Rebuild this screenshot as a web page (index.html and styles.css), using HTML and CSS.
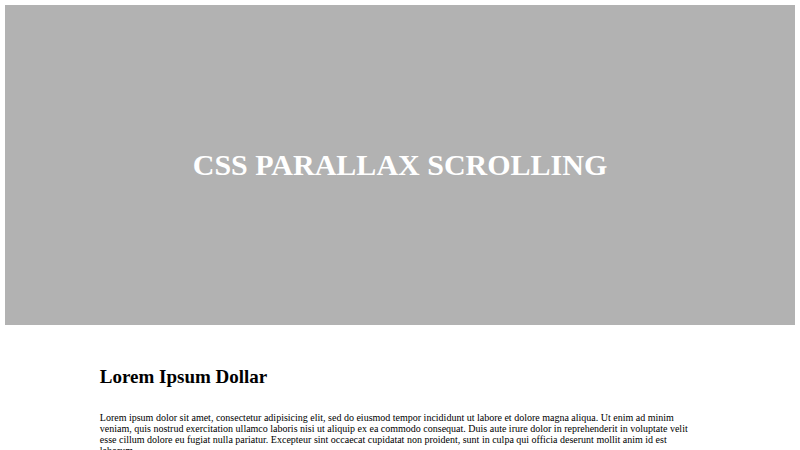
FILE: index.html
```
<!DOCTYPE html>
<html lang="en">
<head>
    <meta charset="UTF-8">
    <meta name="viewport" content="width=device-width, initial-scale=1.0">
    <title>CSS Parallax Scrolling</title>
    <link rel="stylesheet" href="styles.css">
</head>
<body>
    <header class="hero">
        <h1>CSS Parallax Scrolling</h1>
    </header>
    <section class="content">
        <h2>Lorem Ipsum Dollar</h2>
        <p>Lorem ipsum dolor sit amet, consectetur adipisicing elit, sed do eiusmod tempor incididunt ut labore et dolore magna aliqua. Ut enim ad minim veniam, quis nostrud exercitation ullamco laboris nisi ut aliquip ex ea commodo consequat. Duis aute irure dolor in reprehenderit in voluptate velit esse cillum dolore eu fugiat nulla pariatur. Excepteur sint occaecat cupidatat non proident, sunt in culpa qui officia deserunt mollit anim id est laborum.</p>
    </section>
</body>
</html>
```

FILE: styles.css
```
body {
    margin: 5px;
    font-family: "Liberation Serif", "Times New Roman", serif;
    font-size: 10px;
    line-height: 11px;
    color: #000;
    background-color: #fff;
}

.hero {
    display: flex;
    align-items: center;
    justify-content: center;
    height: 320px;
    background-color: #b2b2b2;
}

.hero h1 {
    margin: 0;
    font-size: 30px;
    line-height: 36px;
    color: #fff;
    text-transform: uppercase;
}

.content {
    padding: 40px 12%;
}

.content h2 {
    margin: 0 0 23px;
    font-size: 19px;
    line-height: 24px;
}

.content p {
    margin: 0;
}
```
